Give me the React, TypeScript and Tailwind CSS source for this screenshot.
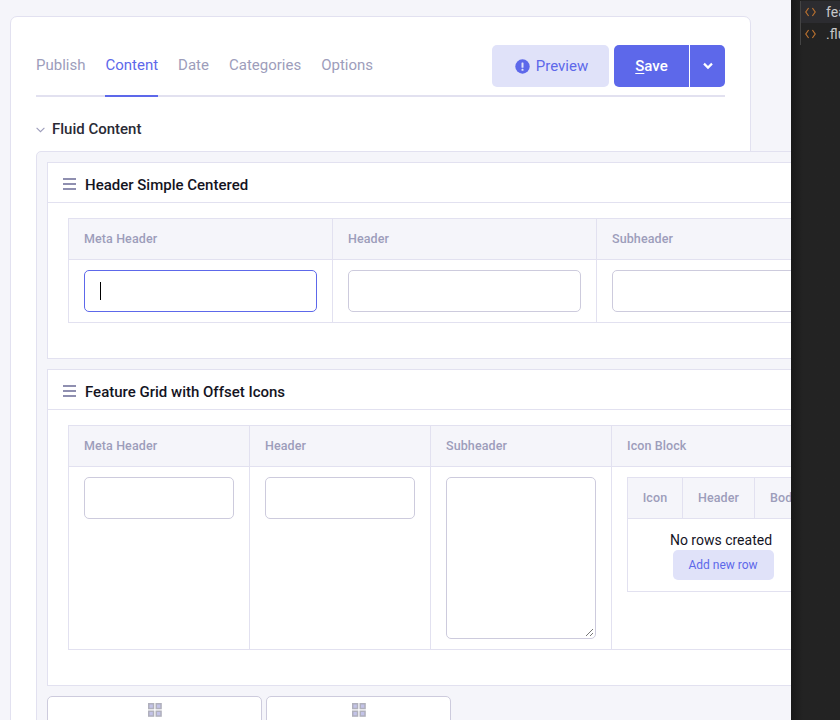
function Handle() {
  return (
    <div className="flex w-[13px] flex-col gap-[3px]">
      <div className="h-[2px] bg-[#8f8fb0]" />
      <div className="h-[2px] bg-[#8f8fb0]" />
      <div className="h-[2px] bg-[#8f8fb0]" />
    </div>
  )
}

function GridIcon() {
  return (
    <svg width="14" height="14" viewBox="0 0 14 14">
      <rect x="0.75" y="0.75" width="4.8" height="4.8" fill="#c3c3e8" stroke="#b0b0bc" strokeWidth="1.5" />
      <rect x="8.25" y="0.75" width="4.8" height="4.8" fill="#c3c3e8" stroke="#b0b0bc" strokeWidth="1.5" />
      <rect x="0.75" y="8.25" width="4.8" height="4.8" fill="#c3c3e8" stroke="#b0b0bc" strokeWidth="1.5" />
      <rect x="8.25" y="8.25" width="4.8" height="4.8" fill="#c3c3e8" stroke="#b0b0bc" strokeWidth="1.5" />
    </svg>
  )
}

function FileIcon() {
  return (
    <svg width="11" height="10" viewBox="0 0 11 10" className="shrink-0">
      <path d="M3.6 1 L0.8 5 L3.6 9 M7.4 1 L10.2 5 L7.4 9" fill="none" stroke="#b8702f" strokeWidth="1.2" />
    </svg>
  )
}

function Input({ focused }: { focused?: boolean }) {
  if (focused) {
    return (
      <div className="flex h-[42px] items-center rounded-[5px] border border-[#5d68ea] bg-white pl-[15px]">
        <div className="h-[18px] w-px bg-black" />
      </div>
    )
  }
  return <div className="h-[42px] rounded-[5px] border border-[#cdcbdd] bg-white" />
}

function HeadCell({ label, width, last }: { label: string; width: string; last?: boolean }) {
  return (
    <div className={`flex h-[40px] shrink-0 items-center px-[15px] text-[12.5px] font-medium tracking-[0.1px] text-[#9d9dbb] ${width} ${last ? '' : 'border-r border-[#e2e1f0]'}`}>
      {label}
    </div>
  )
}

function Block({ title, children, height }: { title: string; children: React.ReactNode; height: string }) {
  return (
    <div className={`border border-[#e2e1f0] bg-white ${height}`}>
      <div className="flex h-[40px] items-center gap-[9px] border-b border-[#e2e1f0] pl-[15px]">
        <div className="mt-[3px]"><Handle /></div>
        <span className="mt-[5px] text-[15px] font-medium text-[#14141f]">{title}</span>
      </div>
      <div className="pt-[15px] pl-[20px]">{children}</div>
    </div>
  )
}

function HeaderBlock() {
  return (
    <div className="w-[1000px] border border-[#e2e1f0]">
      <div className="flex border-b border-[#e2e1f0] bg-[#f5f5fa]">
        <HeadCell label="Meta Header" width="w-[264px]" />
        <HeadCell label="Header" width="w-[264px]" />
        <HeadCell label="Subheader" width="w-[264px]" />
      </div>
      <div className="flex h-[62px]">
        <div className="w-[264px] border-r border-[#e2e1f0] p-[10px_15px]"><Input focused /></div>
        <div className="w-[264px] border-r border-[#e2e1f0] p-[10px_15px]"><Input /></div>
        <div className="w-[264px] p-[10px_15px]"><Input /></div>
      </div>
    </div>
  )
}

function FeatureGrid() {
  return (
    <div className="w-[1000px] border border-[#e2e1f0]">
      <div className="flex border-b border-[#e2e1f0] bg-[#f5f5fa]">
        <HeadCell label="Meta Header" width="w-[181px]" />
        <HeadCell label="Header" width="w-[181px]" />
        <HeadCell label="Subheader" width="w-[181px]" />
        <HeadCell label="Icon Block" width="w-[400px]" last />
      </div>
      <div className="flex h-[182px]">
        <div className="w-[181px] border-r border-[#e2e1f0] p-[10px_15px]"><Input /></div>
        <div className="w-[181px] border-r border-[#e2e1f0] p-[10px_15px]"><Input /></div>
        <div className="w-[181px] border-r border-[#e2e1f0] p-[10px_15px]">
          <div className="relative h-[162px] rounded-[5px] border border-[#cdcbdd] bg-white">
            <svg className="absolute right-[1px] bottom-[1px]" width="9" height="9" viewBox="0 0 9 9">
              <path d="M1 8 L8 1 M5 8 L8 5" stroke="#555" strokeWidth="0.8" />
            </svg>
          </div>
        </div>
        <div className="w-[400px] p-[10px_15px]">
          <div className="w-[370px] border border-[#e2e1f0]">
            <div className="flex h-[41px] border-b border-[#e2e1f0] bg-[#f5f5fa] text-[12.5px] font-medium tracking-[0.1px] text-[#9d9dbb]">
              <div className="flex w-[55px] items-center justify-center border-r border-[#e2e1f0]">Icon</div>
              <div className="flex w-[72px] items-center justify-center border-r border-[#e2e1f0]">Header</div>
              <div className="flex items-center pl-[15px]">Body</div>
            </div>
            <div className="flex h-[72px] w-[186px] flex-col items-center">
              <div className="mt-[12px] text-[14px] leading-[19px] text-[#14141f]">No rows created</div>
              <div className="flex h-[30px] w-[101px] shrink-0 translate-x-[2px] items-center justify-center rounded-[5px] bg-[#e0e2f9] text-[12px] text-[#5d68ea]">
                Add new row
              </div>
            </div>
          </div>
        </div>
      </div>
    </div>
  )
}

export default function App() {
  return (
    <div className="flex h-[720px] w-[840px] overflow-hidden bg-[#f5f5fa] font-['Roboto',sans-serif]">
      <div className="h-[720px] w-[791px] shrink-0 overflow-hidden pt-[16px] pl-[10px]">
        <div className="h-[900px] w-[741px] rounded-t-[7px] border border-[#e2e1f0] bg-white px-[25px]">
          <div className="flex h-[80px] items-start justify-between border-b-2 border-[#e2e1f0]">
            <div className="flex gap-[20px] text-[15px] text-[#9d9dbb]">
              <div className="flex h-[80px] items-center pt-[16px]">Publish</div>
              <div className="flex h-[80px] items-center border-b-2 border-[#5d68ea] pt-[18px] text-[#5d68ea]">Content</div>
              <div className="flex h-[80px] items-center pt-[16px]">Date</div>
              <div className="flex h-[80px] items-center pt-[16px]">Categories</div>
              <div className="flex h-[80px] items-center pt-[16px]">Options</div>
            </div>
            <div className="mt-[28px] flex gap-[5px]">
              <div className="flex h-[42px] w-[117px] items-center justify-center gap-[6px] rounded-[5px] bg-[#e0e2f9] pl-[2px] text-[15px] text-[#5d68ea]">
                <svg width="15" height="15" viewBox="0 0 15 15">
                  <circle cx="7.5" cy="7.5" r="7.2" fill="#5d68ea" />
                  <rect x="6.5" y="3.4" width="2" height="5.4" rx="0.6" fill="#e0e2f9" />
                  <rect x="6.5" y="9.8" width="2" height="2" rx="0.6" fill="#e0e2f9" />
                </svg>
                Preview
              </div>
              <div className="flex h-[42px] w-[111px] rounded-[5px] bg-[#5d68ea] text-white">
                <div className="flex w-[76px] items-center justify-center border-r border-white text-[15px] font-medium">
                  <span><span className="underline underline-offset-2">S</span>ave</span>
                </div>
                <div className="flex flex-1 items-center justify-center">
                  <svg width="10" height="8" viewBox="0 0 10 8" className="mb-[1px]">
                    <path d="M1 1.6 L5 5.6 L9 1.6" fill="none" stroke="#fff" strokeWidth="2.2" />
                  </svg>
                </div>
              </div>
            </div>
          </div>
          <div className="flex h-[54px] items-center gap-[7px] pt-[11px]">
            <svg width="9" height="6" viewBox="0 0 9 6" className="shrink-0">
              <path d="M0.6 0.8 L4.5 4.7 L8.4 0.8" fill="none" stroke="#9d9dbb" strokeWidth="1.1" />
            </svg>
            <span className="text-[15px] font-medium text-[#2a2a35]">Fluid Content</span>
          </div>
          <div className="flex w-[1050px] flex-col gap-[10px] rounded-tl-[5px] border border-[#e2e1f0] bg-[#f5f5fa] p-[10px]">
            <Block title="Header Simple Centered" height="h-[197px]"><HeaderBlock /></Block>
            <Block title="Feature Grid with Offset Icons" height="h-[317px]"><FeatureGrid /></Block>
            <div className="flex gap-[4px]">
              <div className="flex h-[60px] w-[215px] justify-center rounded-t-[5px] border border-[#cdcbdd] bg-white pt-[6px]"><GridIcon /></div>
              <div className="flex h-[60px] w-[185px] justify-center rounded-t-[5px] border border-[#cdcbdd] bg-white pt-[6px]"><GridIcon /></div>
            </div>
          </div>
        </div>
      </div>
      <div className="h-[720px] flex-1 overflow-hidden bg-gradient-to-r from-[#191919] to-[#232323] to-[12px] text-[14px] text-[#c8c8c8]">
        <div className="mt-[1px] ml-[9px] h-[44px] border-l border-[#444]">
          <div className="flex h-[22px] items-center gap-[10px] bg-[#2c2c30] pl-[4px]">
            <FileIcon />
            <span>feature</span>
          </div>
          <div className="flex h-[22px] items-center gap-[10px] pl-[4px]">
            <FileIcon />
            <span>.fluid</span>
          </div>
        </div>
      </div>
    </div>
  )
}
